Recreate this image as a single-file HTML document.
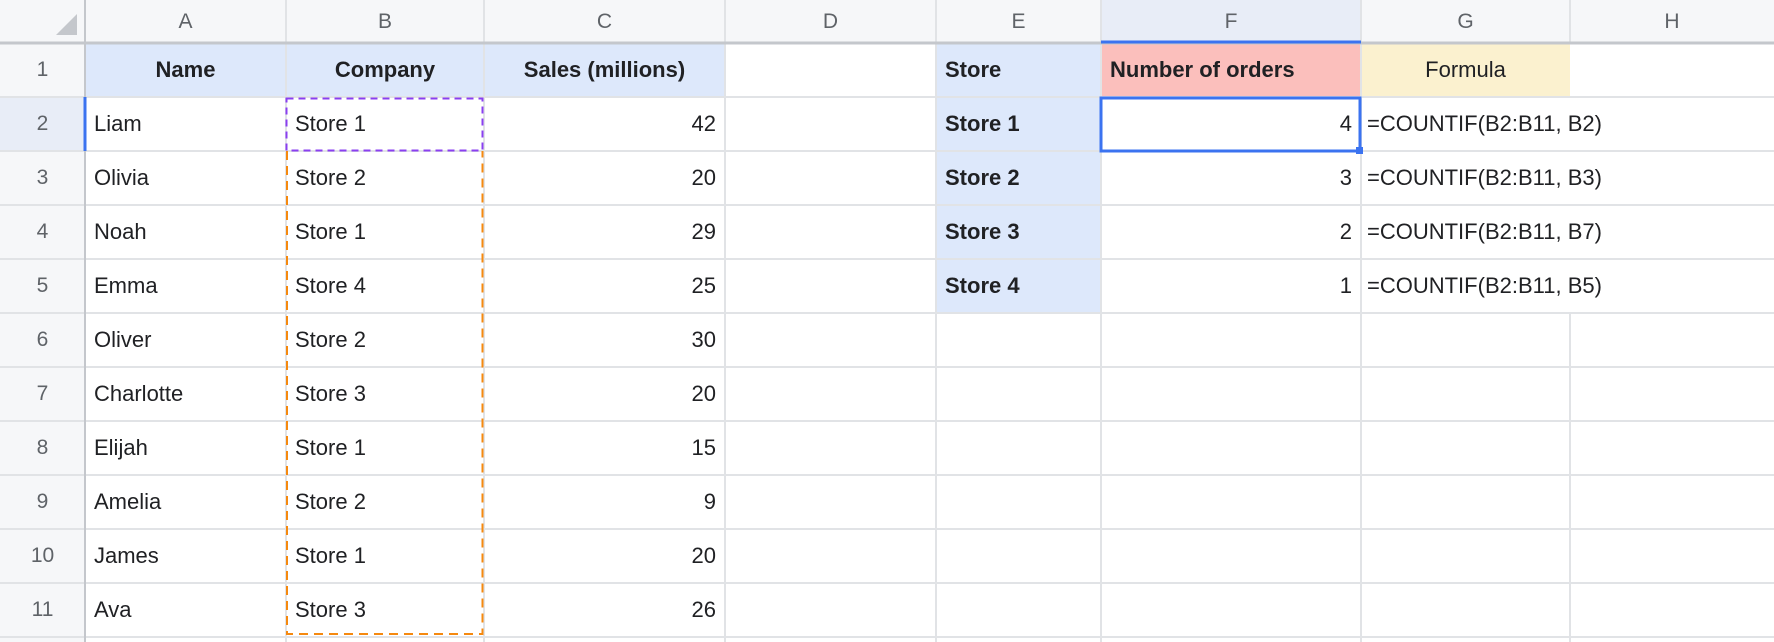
<!DOCTYPE html>
<html><head><meta charset="utf-8"><style>
body{margin:0;width:1774px;height:642px;overflow:hidden;background:#fff;font-family:"Liberation Sans",Arial,sans-serif;color:#202124;position:relative}
.a{position:absolute;box-sizing:border-box}
.c{position:absolute;box-sizing:border-box;height:54px;line-height:54px;font-size:22px;padding:0 9px;white-space:nowrap}
.h{position:absolute;top:0;height:43px;line-height:43px;text-align:center;font-size:21px;color:#5f6368}
.rh{position:absolute;left:0;width:85px;height:54px;line-height:54px;text-align:center;font-size:21px;color:#5f6368}
.b{font-weight:bold}
.r{text-align:right}
.ctr{text-align:center}
</style></head><body>
<div class="a" style="left:0;top:0;width:1774px;height:43px;background:#f6f7f9"></div>
<div class="a" style="left:0;top:0;width:85px;height:642px;background:#f6f7f9"></div>
<div class="a" style="left:1101px;top:0;width:260px;height:43px;background:#e8edf7"></div>
<div class="a" style="left:0;top:97px;width:85px;height:54px;background:#e8edf7"></div>
<div class="a" style="left:85px;top:43px;width:640px;height:54px;background:#dde8fb"></div>
<div class="a" style="left:936px;top:43px;width:165px;height:270px;background:#dde8fb"></div>
<div class="a" style="left:1101px;top:43px;width:260px;height:54px;background:#fbbfbc"></div>
<div class="a" style="left:1361px;top:43px;width:209px;height:54px;background:#fbf1cf"></div>
<svg class="a" style="left:0;top:0" width="1774" height="642">
<g stroke="#e1e3e6" stroke-width="2">
<line x1="85" y1="0" x2="85" y2="642"/>
<line x1="286" y1="0" x2="286" y2="642"/>
<line x1="484" y1="0" x2="484" y2="642"/>
<line x1="725" y1="0" x2="725" y2="642"/>
<line x1="936" y1="0" x2="936" y2="642"/>
<line x1="1101" y1="0" x2="1101" y2="642"/>
<line x1="1361" y1="0" x2="1361" y2="642"/>
<line x1="1570" y1="0" x2="1570" y2="43"/>
<line x1="1570" y1="313" x2="1570" y2="642"/>
<line x1="0" y1="97" x2="1774" y2="97"/>
<line x1="0" y1="151" x2="1774" y2="151"/>
<line x1="0" y1="205" x2="1774" y2="205"/>
<line x1="0" y1="259" x2="1774" y2="259"/>
<line x1="0" y1="313" x2="1774" y2="313"/>
<line x1="0" y1="367" x2="1774" y2="367"/>
<line x1="0" y1="421" x2="1774" y2="421"/>
<line x1="0" y1="475" x2="1774" y2="475"/>
<line x1="0" y1="529" x2="1774" y2="529"/>
<line x1="0" y1="583" x2="1774" y2="583"/>
<line x1="0" y1="637" x2="1774" y2="637"/>
</g>
<line x1="0" y1="43" x2="1774" y2="43" stroke="#c4c7cc" stroke-width="3"/>
<line x1="85" y1="0" x2="85" y2="642" stroke="#c4c7cc" stroke-width="2"/>
<polygon points="77,14 77,35 56,35" fill="#c4c7cc"/>
<line x1="1101" y1="42" x2="1361" y2="42" stroke="#3b73f0" stroke-width="3"/>
<line x1="85" y1="97" x2="85" y2="151" stroke="#3b73f0" stroke-width="3"/>
<rect x="286.5" y="98.5" width="196" height="52" fill="none" stroke="#8a3ff0" stroke-width="2" stroke-dasharray="7,5"/>
<path d="M287 151 V634 H482.5 V151" fill="none" stroke="#f5890f" stroke-width="2" stroke-dasharray="9,6"/>
<rect x="1101" y="98" width="259" height="53" fill="none" stroke="#3b73f0" stroke-width="3"/>
<rect x="1356" y="147" width="7" height="7" fill="#3b73f0"/>
</svg>
<div class="h" style="left:85px;width:201px">A</div>
<div class="h" style="left:286px;width:198px">B</div>
<div class="h" style="left:484px;width:241px">C</div>
<div class="h" style="left:725px;width:211px">D</div>
<div class="h" style="left:936px;width:165px">E</div>
<div class="h" style="left:1101px;width:260px">F</div>
<div class="h" style="left:1361px;width:209px">G</div>
<div class="h" style="left:1570px;width:204px">H</div>
<div class="rh" style="top:43px">1</div>
<div class="rh" style="top:97px">2</div>
<div class="rh" style="top:151px">3</div>
<div class="rh" style="top:205px">4</div>
<div class="rh" style="top:259px">5</div>
<div class="rh" style="top:313px">6</div>
<div class="rh" style="top:367px">7</div>
<div class="rh" style="top:421px">8</div>
<div class="rh" style="top:475px">9</div>
<div class="rh" style="top:529px">10</div>
<div class="rh" style="top:583px">11</div>
<div class="c b ctr" style="left:85px;top:43px;width:201px">Name</div>
<div class="c b ctr" style="left:286px;top:43px;width:198px">Company</div>
<div class="c b ctr" style="left:484px;top:43px;width:241px">Sales (millions)</div>
<div class="c b" style="left:936px;top:43px;width:165px">Store</div>
<div class="c b" style="left:1101px;top:43px;width:260px">Number of orders</div>
<div class="c ctr" style="left:1361px;top:43px;width:209px">Formula</div>
<div class="c" style="left:85px;top:97px">Liam</div><div class="c" style="left:286px;top:97px">Store 1</div><div class="c r" style="left:484px;top:97px;width:241px">42</div>
<div class="c" style="left:85px;top:151px">Olivia</div><div class="c" style="left:286px;top:151px">Store 2</div><div class="c r" style="left:484px;top:151px;width:241px">20</div>
<div class="c" style="left:85px;top:205px">Noah</div><div class="c" style="left:286px;top:205px">Store 1</div><div class="c r" style="left:484px;top:205px;width:241px">29</div>
<div class="c" style="left:85px;top:259px">Emma</div><div class="c" style="left:286px;top:259px">Store 4</div><div class="c r" style="left:484px;top:259px;width:241px">25</div>
<div class="c" style="left:85px;top:313px">Oliver</div><div class="c" style="left:286px;top:313px">Store 2</div><div class="c r" style="left:484px;top:313px;width:241px">30</div>
<div class="c" style="left:85px;top:367px">Charlotte</div><div class="c" style="left:286px;top:367px">Store 3</div><div class="c r" style="left:484px;top:367px;width:241px">20</div>
<div class="c" style="left:85px;top:421px">Elijah</div><div class="c" style="left:286px;top:421px">Store 1</div><div class="c r" style="left:484px;top:421px;width:241px">15</div>
<div class="c" style="left:85px;top:475px">Amelia</div><div class="c" style="left:286px;top:475px">Store 2</div><div class="c r" style="left:484px;top:475px;width:241px">9</div>
<div class="c" style="left:85px;top:529px">James</div><div class="c" style="left:286px;top:529px">Store 1</div><div class="c r" style="left:484px;top:529px;width:241px">20</div>
<div class="c" style="left:85px;top:583px">Ava</div><div class="c" style="left:286px;top:583px">Store 3</div><div class="c r" style="left:484px;top:583px;width:241px">26</div>
<div class="c b" style="left:936px;top:97px">Store 1</div><div class="c r" style="left:1101px;top:97px;width:260px">4</div><div class="c" style="left:1361px;top:97px;padding-left:6px">=COUNTIF(B2:B11, B2)</div>
<div class="c b" style="left:936px;top:151px">Store 2</div><div class="c r" style="left:1101px;top:151px;width:260px">3</div><div class="c" style="left:1361px;top:151px;padding-left:6px">=COUNTIF(B2:B11, B3)</div>
<div class="c b" style="left:936px;top:205px">Store 3</div><div class="c r" style="left:1101px;top:205px;width:260px">2</div><div class="c" style="left:1361px;top:205px;padding-left:6px">=COUNTIF(B2:B11, B7)</div>
<div class="c b" style="left:936px;top:259px">Store 4</div><div class="c r" style="left:1101px;top:259px;width:260px">1</div><div class="c" style="left:1361px;top:259px;padding-left:6px">=COUNTIF(B2:B11, B5)</div>
</body></html>
